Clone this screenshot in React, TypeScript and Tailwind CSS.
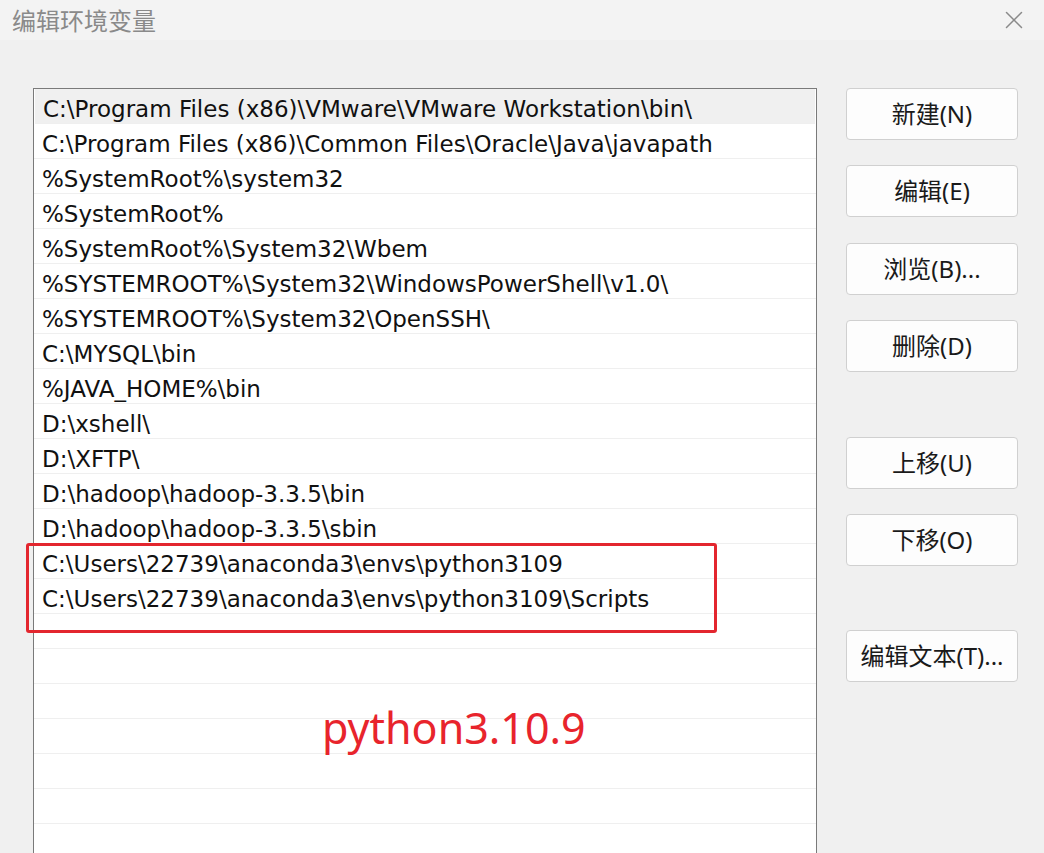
import { X } from 'lucide-react'

const paths = [
  'C:\\Program Files (x86)\\VMware\\VMware Workstation\\bin\\',
  'C:\\Program Files (x86)\\Common Files\\Oracle\\Java\\javapath',
  '%SystemRoot%\\system32',
  '%SystemRoot%',
  '%SystemRoot%\\System32\\Wbem',
  '%SYSTEMROOT%\\System32\\WindowsPowerShell\\v1.0\\',
  '%SYSTEMROOT%\\System32\\OpenSSH\\',
  'C:\\MYSQL\\bin',
  '%JAVA_HOME%\\bin',
  'D:\\xshell\\',
  'D:\\XFTP\\',
  'D:\\hadoop\\hadoop-3.3.5\\bin',
  'D:\\hadoop\\hadoop-3.3.5\\sbin',
  'C:\\Users\\22739\\anaconda3\\envs\\python3109',
  'C:\\Users\\22739\\anaconda3\\envs\\python3109\\Scripts',
]

const rows = [...paths, ...Array(7).fill('')]

function DlgButton({ label, className = '' }: { label: string; className?: string }) {
  return (
    <button className={`h-[52px] w-[172px] rounded-[4px] border border-[#d0d0d0] bg-[#fdfdfd] text-[24px] text-[#1a1a1a] ${className}`}>
      {label}
    </button>
  )
}

export default function App() {
  return (
    <div
      className="relative h-[853px] w-[1044px] overflow-hidden bg-[#f0f0f0]"
      style={{ fontFamily: '"Noto Sans", "Noto Sans CJK SC", sans-serif' }}
    >
      <div className="flex h-[40px] items-center justify-between bg-[#f3f3f3] pl-[12px] pr-[15px]">
        <span className="text-[24px] text-[#8a8a8a]" style={{ fontFamily: '"Noto Sans CJK SC", sans-serif' }}>
          编辑环境变量
        </span>
        <X size={30} strokeWidth={1.2} className="text-[#8a8a8a]" />
      </div>

      <div className="flex pl-[33px] pt-[48px]">
        <div className="relative h-[800px] w-[784px] border border-[#7a7a7a] bg-white">
          {rows.map((p, i) => (
            <div
              key={i}
              className={`h-[35px] whitespace-nowrap border-b border-[#efefef] pl-[8px] pt-[4px] text-[23px] leading-[32px] text-[#111] ${i === 0 ? 'mx-[1px] bg-[#f0f0f0]' : ''}`}
              style={{ fontFamily: '"DejaVu Sans", sans-serif' }}
            >
              {p}
            </div>
          ))}
          <div className="absolute left-[288px] top-[617px] text-[43px] leading-none text-[#e8242c]">
            python3.10.9
          </div>
        </div>

        <div className="ml-[29px] flex flex-col">
          <DlgButton label="新建(N)" />
          <DlgButton label="编辑(E)" className="mt-[25px]" />
          <DlgButton label="浏览(B)..." className="mt-[26px]" />
          <DlgButton label="删除(D)" className="mt-[25px]" />
          <DlgButton label="上移(U)" className="mt-[65px]" />
          <DlgButton label="下移(O)" className="mt-[25px]" />
          <DlgButton label="编辑文本(T)..." className="mt-[64px]" />
        </div>
      </div>

      <div className="absolute left-[26px] top-[543px] h-[90px] w-[691px] rounded-[3px] border-[3px] border-[#e3262e]" />
    </div>
  )
}
